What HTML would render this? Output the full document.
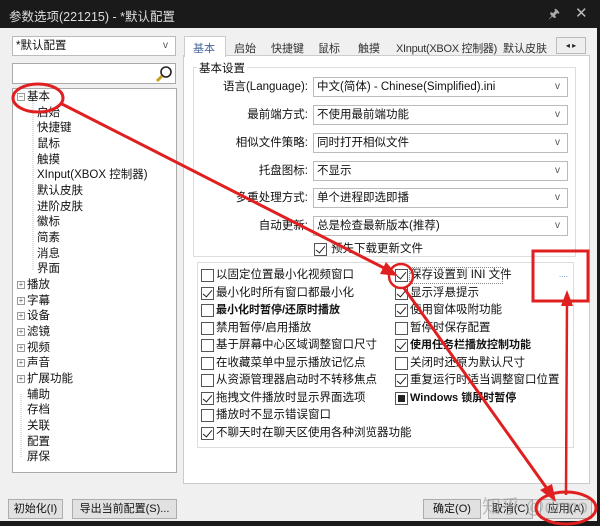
<!DOCTYPE html>
<html><head><meta charset="utf-8"><style>
*{margin:0;padding:0;box-sizing:border-box}
body{width:600px;height:526px;overflow:hidden;background:#1a1a1a;font-family:"Liberation Sans","Noto Sans CJK SC",sans-serif;font-size:11.5px;color:#111;position:relative}
.a{position:absolute;white-space:nowrap}
#win{position:absolute;left:0;top:28px;width:597px;height:493px;background:#f0f0f0}
.combo{position:absolute;background:#fff;border:1px solid #bbb;height:20px;line-height:18px;padding-left:3px;font-size:11.5px}
.combo:after{content:"v";position:absolute;right:7px;top:0;font-size:10px;color:#555}
.tree{position:absolute;left:12px;top:88px;width:165px;height:385px;background:#fff;border:1px solid #aaa}
.ti{position:absolute;font-size:11.5px;line-height:14px}
.pm{position:absolute;width:8px;height:8px;border:1px solid #999;font-size:8px;line-height:6px;text-align:center;color:#666}
.btn{position:absolute;height:20px;border:1px solid #adadad;background:#e1e1e1;font-size:11px;line-height:18px;text-align:center}
.cb{position:absolute;width:13px;height:13px;border:1px solid #555;background:#fff}
.cb.c:after{content:"";position:absolute;left:3px;top:0px;width:4px;height:8px;border:solid #222;border-width:0 1.5px 1.5px 0;transform:rotate(40deg)}
.ck{position:absolute;font-size:11.5px;line-height:14px}
.b{font-weight:bold;font-size:11px}
.lbl{position:absolute;right:292px;font-size:11.5px;line-height:14px}
.tab{position:absolute;top:40px;color:#333;font-size:11px}
</style></head><body>
<div class="a" style="left:9px;top:6px;color:#ddd;font-size:12.5px">参数选项(221215) - *默认配置</div>
<div class="a" style="left:548px;top:5px;color:#aaa;font-size:13px">🖈</div>
<div class="a" style="left:575px;top:4px;color:#bbb;font-size:15px">✕</div>
<div id="win"></div>
<div class="combo" style="left:12px;top:36px;width:164px">*默认配置</div>
<div class="combo" style="left:12px;top:63px;width:164px;border-color:#aaa;height:21px"></div>
<svg class="a" style="left:155px;top:65px" width="18" height="18"><circle cx="11" cy="7" r="5" fill="#fff" stroke="#222" stroke-width="1.6"/><line x1="7" y1="11" x2="2" y2="16" stroke="#c8a020" stroke-width="3"/></svg>
<div class="tree"></div>
<div class="pm" style="left:17px;top:93px">−</div>
<svg class="a" style="left:0;top:0" width="200" height="526"><g stroke="#bbb" stroke-dasharray="1 1"><line x1="33" y1="101" x2="33" y2="270"/><line x1="21" y1="394" x2="21" y2="458"/></g></svg>
<div id="tl"></div>
<script>
var items=[["基本",27,1],["启始",37],["快捷键",37],["鼠标",37],["触摸",37],["XInput(XBOX 控制器)",37],["默认皮肤",37],["进阶皮肤",37],["徽标",37],["简素",37],["消息",37],["界面",37],["播放",27,2],["字幕",27,2],["设备",27,2],["滤镜",27,2],["视频",27,2],["声音",27,2],["扩展功能",27,2],["辅助",27],["存档",27],["关联",27],["配置",27],["屏保",27]];
var h="";items.forEach(function(it,i){var y=90+i*15.67;h+='<div class="ti a" style="left:'+it[1]+'px;top:'+y+'px">'+it[0]+'</div>';if(it[2]==2)h+='<div class="pm" style="left:17px;top:'+(y+3)+'px">+</div>';});
document.getElementById("tl").innerHTML=h;
</script>
<div class="a" style="left:183px;top:55px;width:407px;height:429px;background:#fff;border:1px solid #ccc"></div>
<div class="a" style="left:184px;top:36px;width:42px;height:21px;background:#fff;border:1px solid #ccc;border-bottom:none"></div>
<div class="tab a" style="left:193px;color:#4a6a9a">基本</div>
<div class="tab a" style="left:234px">启始</div>
<div class="tab a" style="left:271px">快捷键</div>
<div class="tab a" style="left:318px">鼠标</div>
<div class="tab a" style="left:358px">触摸</div>
<div class="tab a" style="left:396px;letter-spacing:-0.3px">XInput(XBOX 控制器)</div>
<div class="tab a" style="left:503px">默认皮肤</div>
<div class="a" style="left:556px;top:37px;width:30px;height:17px;border:1px solid #bbb;background:#eee;font-size:8px;line-height:15px;text-align:center;color:#222">◂ ▸</div>
<div class="a" style="left:193px;top:67px;width:383px;height:190px;border:1px solid #ddd"></div>
<div class="a" style="left:197px;top:60px;background:#fff;padding:0 2px">基本设置</div>
<div class="lbl a" style="top:80px">语言(Language):</div>
<div class="lbl a" style="top:108px">最前端方式:</div>
<div class="lbl a" style="top:136px">相似文件策略:</div>
<div class="lbl a" style="top:164px">托盘图标:</div>
<div class="lbl a" style="top:191px">多重处理方式:</div>
<div class="lbl a" style="top:219px">自动更新:</div>
<div class="combo" style="left:313px;top:77px;width:255px">中文(简体) - Chinese(Simplified).ini</div>
<div class="combo" style="left:313px;top:105px;width:255px">不使用最前端功能</div>
<div class="combo" style="left:313px;top:133px;width:255px">同时打开相似文件</div>
<div class="combo" style="left:313px;top:161px;width:255px">不显示</div>
<div class="combo" style="left:313px;top:188px;width:255px">单个进程即选即播</div>
<div class="combo" style="left:313px;top:216px;width:255px">总是检查最新版本(推荐)</div>
<div class="cb c" style="left:314px;top:243px"></div><div class="ck" style="left:331px;top:242px">预先下载更新文件</div>
<div class="a" style="left:197px;top:262px;width:377px;height:186px;border:1px solid #ddd"></div>
<div id="cl"></div>
<script>
var L=[["以固定位置最小化视频窗口",0],["最小化时所有窗口都最小化",1],["最小化时暂停/还原时播放",0,1],["禁用暂停/启用播放",0],["基于屏幕中心区域调整窗口尺寸",0],["在收藏菜单中显示播放记忆点",0],["从资源管理器启动时不转移焦点",0],["拖拽文件播放时显示界面选项",1],["播放时不显示错误窗口",0],["不聊天时在聊天区使用各种浏览器功能",1]];
var R=[["保存设置到 INI 文件",1],["显示浮悬提示",1],["使用窗体吸附功能",1],["暂停时保存配置",0],["使用任务栏播放控制功能",1,1],["关闭时还原为默认尺寸",0],["重复运行时适当调整窗口位置",1],["Windows 锁屏时暂停",2,1]];
var h="";function f(a,x){a.forEach(function(it,i){var y=269+i*17.5;h+='<div class="cb'+(it[1]==1?' c':'')+'" style="left:'+x+'px;top:'+y+'px">'+(it[1]==2?'<div style="position:absolute;left:2px;top:2px;width:7px;height:7px;background:#222"></div>':'')+'</div><div class="ck'+(it[2]?' b':'')+'" style="left:'+(x+15)+'px;top:'+(y-1)+'px">'+it[0]+'</div>';});}
f(L,201);f(R,395);document.getElementById("cl").innerHTML=h;
</script>
<div class="a" style="left:409px;top:267px;width:94px;height:17px;border:1px dotted #888"></div>
<div class="a" style="left:559px;top:270px;color:#4a7ad0;font-size:8px">....</div>
<div class="btn" style="left:8px;top:499px;width:55px">初始化(I)</div>
<div class="btn" style="left:72px;top:499px;width:105px">导出当前配置(S)...</div>
<div class="btn" style="left:423px;top:499px;width:58px">确定(O)</div>
<div class="btn" style="left:488px;top:499px;width:45px">取消(C)</div>
<div class="btn" style="left:540px;top:499px;width:52px">应用(A)</div>
<div class="a" style="left:482px;top:492px;font-size:19px;color:rgba(150,150,150,.55)">知乎 @drmo</div>
<svg class="a" style="left:0;top:0" width="600" height="526"><g fill="none" stroke="#e02020">
<ellipse cx="38" cy="98" rx="25" ry="14" stroke-width="3"/>
<line x1="60" y1="103" x2="388" y2="270" stroke-width="3"/>
<polygon points="398,276 380,274 386,262" fill="#e02020" stroke="none"/>
<circle cx="401" cy="276" r="12" stroke-width="2.5"/>
<rect x="533" y="251" width="55" height="50" stroke-width="3"/>
<line x1="404" y1="288" x2="548" y2="490" stroke-width="3"/>
<polygon points="556,502 540,490 552,484" fill="#e02020" stroke="none"/>
<line x1="566" y1="495" x2="567" y2="300" stroke-width="2.5"/>
<polygon points="567,290 561,306 573,306" fill="#e02020" stroke="none"/>
<ellipse cx="566" cy="508" rx="30" ry="16" stroke-width="3"/>
</g></svg>
</body></html>
